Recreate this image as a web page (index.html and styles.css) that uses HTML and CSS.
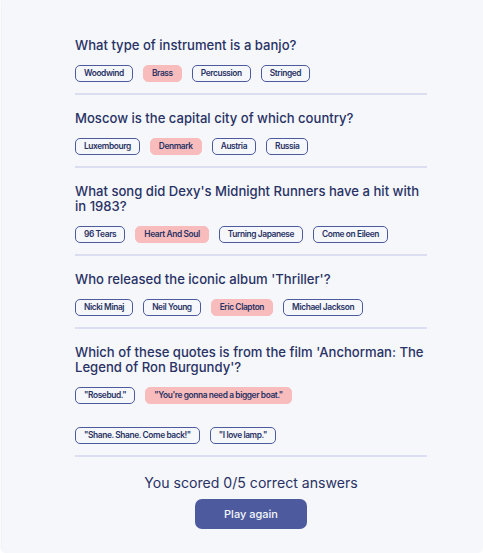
FILE: index.html
```html
<!DOCTYPE html>
<html>
<head>
<meta charset="utf-8">
<link rel="stylesheet" href="styles.css">
</head>
<body>
<main class="card">
  <div class="quiz">
    <section class="q">
      <h2 class="q-title">What type of instrument is a banjo?</h2>
      <div class="answers">
        <button class="ans">Woodwind</button>
        <button class="ans sel">Brass</button>
        <button class="ans">Percussion</button>
        <button class="ans">Stringed</button>
      </div>
    </section>
    <section class="q">
      <h2 class="q-title">Moscow is the capital city of which country?</h2>
      <div class="answers">
        <button class="ans">Luxembourg</button>
        <button class="ans sel">Denmark</button>
        <button class="ans">Austria</button>
        <button class="ans">Russia</button>
      </div>
    </section>
    <section class="q">
      <h2 class="q-title">What song did Dexy's Midnight Runners have a hit with in 1983?</h2>
      <div class="answers">
        <button class="ans">96 Tears</button>
        <button class="ans sel">Heart And Soul</button>
        <button class="ans">Turning Japanese</button>
        <button class="ans">Come on Eileen</button>
      </div>
    </section>
    <section class="q">
      <h2 class="q-title">Who released the iconic album 'Thriller'?</h2>
      <div class="answers">
        <button class="ans">Nicki Minaj</button>
        <button class="ans">Neil Young</button>
        <button class="ans sel">Eric Clapton</button>
        <button class="ans">Michael Jackson</button>
      </div>
    </section>
    <section class="q">
      <h2 class="q-title">Which of these quotes is from the film 'Anchorman: The Legend of Ron Burgundy'?</h2>
      <div class="answers">
        <button class="ans">"Rosebud."</button>
        <button class="ans sel">"You're gonna need a bigger boat."</button>
        <button class="ans">"Shane. Shane. Come back!"</button>
        <button class="ans">"I love lamp."</button>
      </div>
    </section>
    <div class="result">
      <p class="score">You scored 0/5 correct answers</p>
      <button class="again">Play again</button>
    </div>
  </div>
</main>
</body>
</html>
```
FILE: styles.css
```css
* { box-sizing: border-box; }
html, body { margin: 0; padding: 0; background: #ffffff; }
body { font-family: Inter, "Noto Sans", sans-serif; color: #293264; }
.card {
  margin-left: 2px;
  width: 481px;
  height: 553px;
  background: #F5F7FB;
  border-radius: 0 0 6px 6px;
  box-shadow: -1px 0 2px rgba(40, 50, 100, 0.08);
  padding: 38px 0 0 73px;
  overflow: hidden;
}
.quiz { width: 352px; }
.q {
  border-bottom: 2px solid #DBDEF0;
  margin-bottom: 16px;
}
.q-title {
  margin: 0;
  font-size: 13.1px;
  line-height: 15px;
  font-weight: 500;
  color: #293264;
}
.answers {
  display: flex;
  flex-wrap: wrap;
}
.ans {
  font-family: Inter, sans-serif;
  font-size: 8.4px;
  font-weight: 600;
  letter-spacing: -0.4px;
  color: #293264;
  background: transparent;
  border: 1px solid #4D5B9E;
  border-radius: 5px;
  height: 17px;
  padding: 0 8px;
  margin: 12px 10px 11px 0;
  line-height: 15px;
}
.ans.sel {
  background: #F8BCBC;
  border-color: #F8BCBC;
}
.result {
  display: flex;
  flex-direction: column;
  align-items: center;
  padding-top: 1px;
}
.score {
  margin: 0;
  font-size: 14.1px;
  line-height: 18px;
  font-weight: 400;
  color: #293264;
}
.again {
  margin-top: 7px;
  width: 112px;
  height: 30px;
  border: none;
  border-radius: 7px;
  background: #4D5B9E;
  color: #F5F7FB;
  font-family: Inter, sans-serif;
  font-size: 11px;
  font-weight: 500;
}
```
